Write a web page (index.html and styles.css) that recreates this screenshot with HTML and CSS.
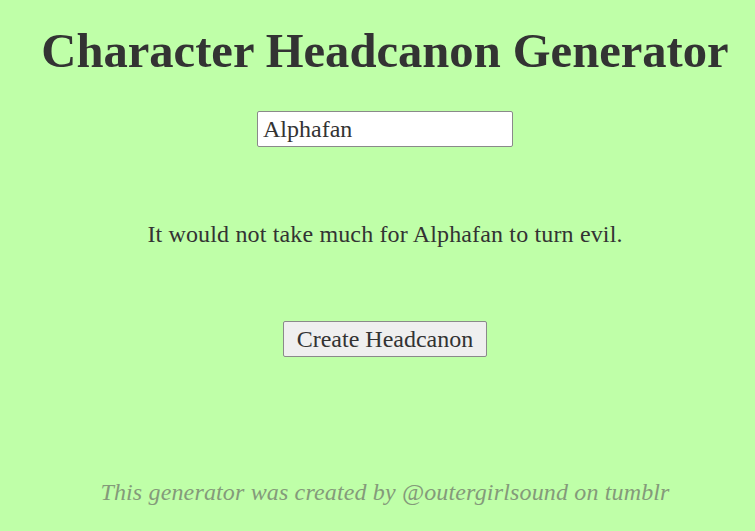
FILE: index.html
```html
<!DOCTYPE html>
<html>
<head>
<meta charset="utf-8">
<link rel="stylesheet" href="styles.css">
</head>
<body>
<div class="page">
  <h1 class="title">Character Headcanon Generator</h1>
  <input class="name-input" type="text" value="Alphafan">
  <p class="result">It would not take much for Alphafan to turn evil.</p>
  <button class="create-btn">Create Headcanon</button>
  <p class="credit">This generator was created by @outergirlsound on tumblr</p>
</div>
</body>
</html>
```
FILE: styles.css
```css
html, body {
  margin: 0;
  padding: 0;
  background: #bfffa8;
}
body {
  font-family: "Liberation Serif", "Times New Roman", serif;
  color: #333333;
}
.page {
  display: flex;
  flex-direction: column;
  align-items: center;
  height: 531px;
  padding-left: 15px;
  box-sizing: border-box;
}
.title {
  margin: 23px 0 0 0;
  font-size: 48.6px;
  font-weight: bold;
  line-height: 56px;
  color: #333333;
  white-space: nowrap;
}
.name-input {
  margin-top: 32px;
  width: 256px;
  height: 36px;
  box-sizing: border-box;
  font-family: "Liberation Serif", serif;
  font-size: 24px;
  color: #333;
  padding: 0 5px;
  border: 1px solid #8a8a8a;
  border-radius: 2px;
  background: #fff;
}
.result {
  margin: 73px 0 0 0;
  font-size: 24px;
  line-height: 28px;
  letter-spacing: 0.15px;
}
.create-btn {
  margin-top: 73px;
  width: 204px;
  height: 36px;
  font-family: "Liberation Serif", serif;
  font-size: 24px;
  color: #333;
  background: #efefef;
  border: 1px solid #8a8a8a;
  border-radius: 2px;
  padding: 0;
}
.credit {
  margin: 121px 0 0 0;
  font-size: 24px;
  line-height: 28px;
  font-style: italic;
  color: #849a7a;
  letter-spacing: 0.15px;
  white-space: nowrap;
}
```
